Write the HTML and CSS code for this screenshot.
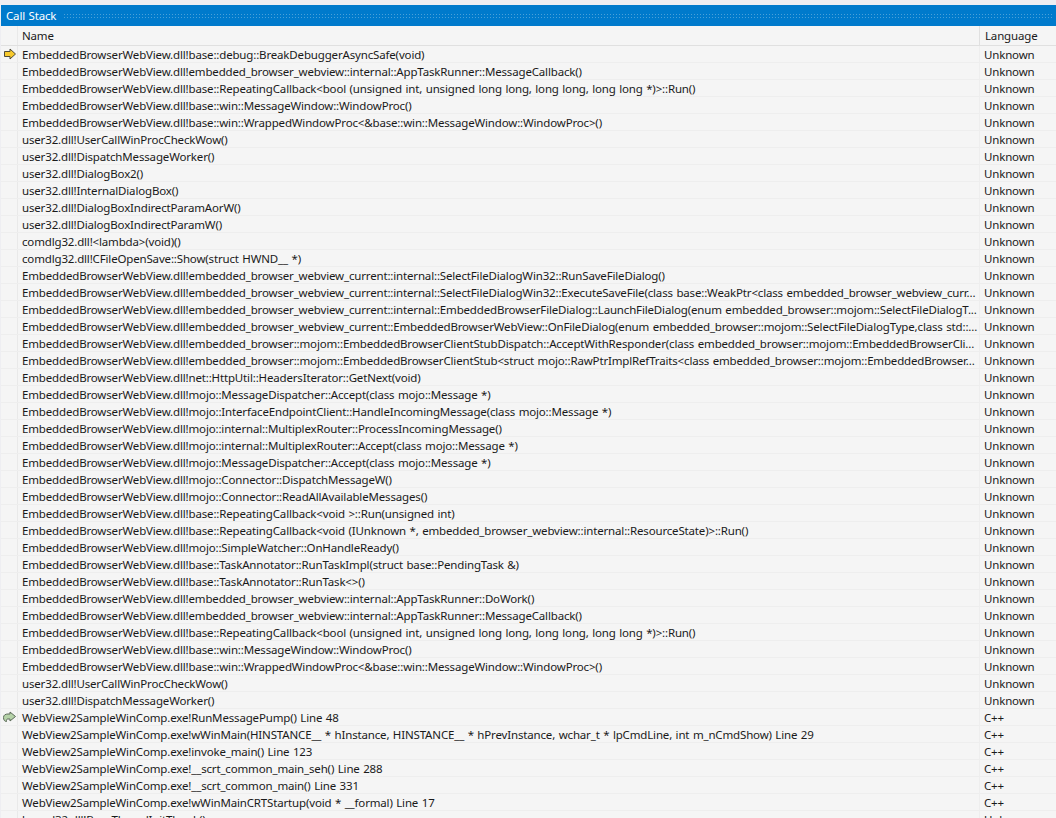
FILE: index.html
```html
<!DOCTYPE html>
<html lang="en">
<head>
    <meta charset="UTF-8">
    <title>Call Stack</title>
    <link rel="stylesheet" href="styles.css">
</head>
<body>
    <div class="panel">
        <div class="title-bar">
            <span class="title">Call Stack</span>
            <div class="grip"></div>
        </div>
        <div class="header">
            <div class="gutter"></div>
            <div class="col-name">Name</div>
            <div class="col-lang">Language</div>
        </div>
        <div class="rows">
            <div class="row"><div class="gutter"><svg class="arrow" width="15" height="12" viewBox="0 0 15 12"><path d="M2.5 3.5h5.5V1L13.5 6 8 11V8.5H2.5z" fill="#f7c92c" stroke="#4d4a3a"/></svg></div><div class="row-name">EmbeddedBrowserWebView.dll!base::debug::BreakDebuggerAsyncSafe(void)</div><div class="row-lang">Unknown</div></div>
            <div class="row"><div class="gutter"></div><div class="row-name">EmbeddedBrowserWebView.dll!embedded_browser_webview::internal::AppTaskRunner::MessageCallback()</div><div class="row-lang">Unknown</div></div>
            <div class="row"><div class="gutter"></div><div class="row-name">EmbeddedBrowserWebView.dll!base::RepeatingCallback&lt;bool (unsigned int, unsigned long long, long long, long long *)&gt;::Run()</div><div class="row-lang">Unknown</div></div>
            <div class="row"><div class="gutter"></div><div class="row-name">EmbeddedBrowserWebView.dll!base::win::MessageWindow::WindowProc()</div><div class="row-lang">Unknown</div></div>
            <div class="row"><div class="gutter"></div><div class="row-name">EmbeddedBrowserWebView.dll!base::win::WrappedWindowProc&lt;&amp;base::win::MessageWindow::WindowProc&gt;()</div><div class="row-lang">Unknown</div></div>
            <div class="row"><div class="gutter"></div><div class="row-name">user32.dll!UserCallWinProcCheckWow()</div><div class="row-lang">Unknown</div></div>
            <div class="row"><div class="gutter"></div><div class="row-name">user32.dll!DispatchMessageWorker()</div><div class="row-lang">Unknown</div></div>
            <div class="row"><div class="gutter"></div><div class="row-name">user32.dll!DialogBox2()</div><div class="row-lang">Unknown</div></div>
            <div class="row"><div class="gutter"></div><div class="row-name">user32.dll!InternalDialogBox()</div><div class="row-lang">Unknown</div></div>
            <div class="row"><div class="gutter"></div><div class="row-name">user32.dll!DialogBoxIndirectParamAorW()</div><div class="row-lang">Unknown</div></div>
            <div class="row"><div class="gutter"></div><div class="row-name">user32.dll!DialogBoxIndirectParamW()</div><div class="row-lang">Unknown</div></div>
            <div class="row"><div class="gutter"></div><div class="row-name">comdlg32.dll!&lt;lambda&gt;(void)()</div><div class="row-lang">Unknown</div></div>
            <div class="row"><div class="gutter"></div><div class="row-name">comdlg32.dll!CFileOpenSave::Show(struct HWND__ *)</div><div class="row-lang">Unknown</div></div>
            <div class="row"><div class="gutter"></div><div class="row-name">EmbeddedBrowserWebView.dll!embedded_browser_webview_current::internal::SelectFileDialogWin32::RunSaveFileDialog()</div><div class="row-lang">Unknown</div></div>
            <div class="row"><div class="gutter"></div><div class="row-name">EmbeddedBrowserWebView.dll!embedded_browser_webview_current::internal::SelectFileDialogWin32::ExecuteSaveFile(class base::WeakPtr&lt;class embedded_browser_webview_curr...</div><div class="row-lang">Unknown</div></div>
            <div class="row"><div class="gutter"></div><div class="row-name">EmbeddedBrowserWebView.dll!embedded_browser_webview_current::internal::EmbeddedBrowserFileDialog::LaunchFileDialog(enum embedded_browser::mojom::SelectFileDialogT...</div><div class="row-lang">Unknown</div></div>
            <div class="row"><div class="gutter"></div><div class="row-name">EmbeddedBrowserWebView.dll!embedded_browser_webview_current::EmbeddedBrowserWebView::OnFileDialog(enum embedded_browser::mojom::SelectFileDialogType,class std::...</div><div class="row-lang">Unknown</div></div>
            <div class="row"><div class="gutter"></div><div class="row-name">EmbeddedBrowserWebView.dll!embedded_browser::mojom::EmbeddedBrowserClientStubDispatch::AcceptWithResponder(class embedded_browser::mojom::EmbeddedBrowserCli...</div><div class="row-lang">Unknown</div></div>
            <div class="row"><div class="gutter"></div><div class="row-name">EmbeddedBrowserWebView.dll!embedded_browser::mojom::EmbeddedBrowserClientStub&lt;struct mojo::RawPtrImplRefTraits&lt;class embedded_browser::mojom::EmbeddedBrowser...</div><div class="row-lang">Unknown</div></div>
            <div class="row"><div class="gutter"></div><div class="row-name">EmbeddedBrowserWebView.dll!net::HttpUtil::HeadersIterator::GetNext(void)</div><div class="row-lang">Unknown</div></div>
            <div class="row"><div class="gutter"></div><div class="row-name">EmbeddedBrowserWebView.dll!mojo::MessageDispatcher::Accept(class mojo::Message *)</div><div class="row-lang">Unknown</div></div>
            <div class="row"><div class="gutter"></div><div class="row-name">EmbeddedBrowserWebView.dll!mojo::InterfaceEndpointClient::HandleIncomingMessage(class mojo::Message *)</div><div class="row-lang">Unknown</div></div>
            <div class="row"><div class="gutter"></div><div class="row-name">EmbeddedBrowserWebView.dll!mojo::internal::MultiplexRouter::ProcessIncomingMessage()</div><div class="row-lang">Unknown</div></div>
            <div class="row"><div class="gutter"></div><div class="row-name">EmbeddedBrowserWebView.dll!mojo::internal::MultiplexRouter::Accept(class mojo::Message *)</div><div class="row-lang">Unknown</div></div>
            <div class="row"><div class="gutter"></div><div class="row-name">EmbeddedBrowserWebView.dll!mojo::MessageDispatcher::Accept(class mojo::Message *)</div><div class="row-lang">Unknown</div></div>
            <div class="row"><div class="gutter"></div><div class="row-name">EmbeddedBrowserWebView.dll!mojo::Connector::DispatchMessageW()</div><div class="row-lang">Unknown</div></div>
            <div class="row"><div class="gutter"></div><div class="row-name">EmbeddedBrowserWebView.dll!mojo::Connector::ReadAllAvailableMessages()</div><div class="row-lang">Unknown</div></div>
            <div class="row"><div class="gutter"></div><div class="row-name">EmbeddedBrowserWebView.dll!base::RepeatingCallback&lt;void &gt;::Run(unsigned int)</div><div class="row-lang">Unknown</div></div>
            <div class="row"><div class="gutter"></div><div class="row-name">EmbeddedBrowserWebView.dll!base::RepeatingCallback&lt;void (IUnknown *, embedded_browser_webview::internal::ResourceState)&gt;::Run()</div><div class="row-lang">Unknown</div></div>
            <div class="row"><div class="gutter"></div><div class="row-name">EmbeddedBrowserWebView.dll!mojo::SimpleWatcher::OnHandleReady()</div><div class="row-lang">Unknown</div></div>
            <div class="row"><div class="gutter"></div><div class="row-name">EmbeddedBrowserWebView.dll!base::TaskAnnotator::RunTaskImpl(struct base::PendingTask &amp;)</div><div class="row-lang">Unknown</div></div>
            <div class="row"><div class="gutter"></div><div class="row-name">EmbeddedBrowserWebView.dll!base::TaskAnnotator::RunTask&lt;&gt;()</div><div class="row-lang">Unknown</div></div>
            <div class="row"><div class="gutter"></div><div class="row-name">EmbeddedBrowserWebView.dll!embedded_browser_webview::internal::AppTaskRunner::DoWork()</div><div class="row-lang">Unknown</div></div>
            <div class="row"><div class="gutter"></div><div class="row-name">EmbeddedBrowserWebView.dll!embedded_browser_webview::internal::AppTaskRunner::MessageCallback()</div><div class="row-lang">Unknown</div></div>
            <div class="row"><div class="gutter"></div><div class="row-name">EmbeddedBrowserWebView.dll!base::RepeatingCallback&lt;bool (unsigned int, unsigned long long, long long, long long *)&gt;::Run()</div><div class="row-lang">Unknown</div></div>
            <div class="row"><div class="gutter"></div><div class="row-name">EmbeddedBrowserWebView.dll!base::win::MessageWindow::WindowProc()</div><div class="row-lang">Unknown</div></div>
            <div class="row"><div class="gutter"></div><div class="row-name">EmbeddedBrowserWebView.dll!base::win::WrappedWindowProc&lt;&amp;base::win::MessageWindow::WindowProc&gt;()</div><div class="row-lang">Unknown</div></div>
            <div class="row"><div class="gutter"></div><div class="row-name">user32.dll!UserCallWinProcCheckWow()</div><div class="row-lang">Unknown</div></div>
            <div class="row"><div class="gutter"></div><div class="row-name">user32.dll!DispatchMessageWorker()</div><div class="row-lang">Unknown</div></div>
            <div class="row"><div class="gutter"><svg class="arrow" width="15" height="12" viewBox="0 0 15 12"><path d="M1.5 6.5C1.5 4 3.5 3 6 3H8V1L13.5 5.5 8 10V8H6C4.8 8 4.2 8.6 4.5 10.5 2.5 10.5 1.5 8.800 1.500 6.500z" fill="#b5d2a8" stroke="#5c6b5a"/></svg></div><div class="row-name">WebView2SampleWinComp.exe!RunMessagePump() Line 48</div><div class="row-lang">C++</div></div>
            <div class="row"><div class="gutter"></div><div class="row-name">WebView2SampleWinComp.exe!wWinMain(HINSTANCE__ * hInstance, HINSTANCE__ * hPrevInstance, wchar_t * lpCmdLine, int m_nCmdShow) Line 29</div><div class="row-lang">C++</div></div>
            <div class="row"><div class="gutter"></div><div class="row-name">WebView2SampleWinComp.exe!invoke_main() Line 123</div><div class="row-lang">C++</div></div>
            <div class="row"><div class="gutter"></div><div class="row-name">WebView2SampleWinComp.exe!__scrt_common_main_seh() Line 288</div><div class="row-lang">C++</div></div>
            <div class="row"><div class="gutter"></div><div class="row-name">WebView2SampleWinComp.exe!__scrt_common_main() Line 331</div><div class="row-lang">C++</div></div>
            <div class="row"><div class="gutter"></div><div class="row-name">WebView2SampleWinComp.exe!wWinMainCRTStartup(void * __formal) Line 17</div><div class="row-lang">C++</div></div>
            <div class="row"><div class="gutter"></div><div class="row-name">kernel32.dll!BaseThreadInitThunk()</div><div class="row-lang">Unknown</div></div>
        </div>
    </div>
</body>
</html>
```

FILE: styles.css
```css
html, body {
    margin: 0;
    height: 100%;
    overflow: hidden;
}
body {
    background-color: #eeeef2;
    color: #1a1a1a;
    font-family: "Noto Sans", sans-serif;
    font-size: 11.5px;
    letter-spacing: -0.16px;
    word-spacing: 0.7px;
}
.panel {
    height: 813px;
    margin: 5px 0 0 1px;
    display: flex;
    flex-direction: column;
    overflow: hidden;
    background-color: #f5f5f5;
}
.title-bar {
    height: 21px;
    flex: none;
    display: flex;
    align-items: center;
    background-color: #007acc;
    color: white;
    padding-left: 5px;
}
.grip {
    flex: 1;
    height: 6px;
    margin: 0 3px 0 7px;
    background-image: radial-gradient(#4aa0d8 0.7px, transparent 0.9px);
    background-size: 3px 3px;
}
.header {
    height: 20px;
    flex: none;
    display: flex;
    align-items: center;
    box-sizing: border-box;
    border-bottom: 1px solid #e0e0e0;
}
.gutter {
    width: 17px;
    height: 100%;
    flex: none;
    box-sizing: border-box;
    border-right: 1px solid #e9e9e9;
}
.col-name {
    flex: 1;
    padding-left: 4px;
}
.col-lang {
    width: 77px;
    height: 100%;
    line-height: 19px;
    flex: none;
    box-sizing: border-box;
    padding-left: 5px;
    border-left: 1px solid #e0e0e0;
}
.row {
    height: 17px;
    display: flex;
    align-items: center;
    box-sizing: border-box;
    border-bottom: 1px solid #eeeeee;
    white-space: nowrap;
}
.row .gutter {
    display: flex;
    align-items: center;
    justify-content: center;
}
.arrow {
    flex: none;
}
.row-name {
    width: 961px;
    flex: none;
    box-sizing: border-box;
    padding-left: 4px;
    overflow: hidden;
}
.row-lang {
    flex: 1;
    height: 100%;
    display: flex;
    align-items: center;
    padding-left: 4px;
    border-left: 1px solid #eeeeee;
}
```
